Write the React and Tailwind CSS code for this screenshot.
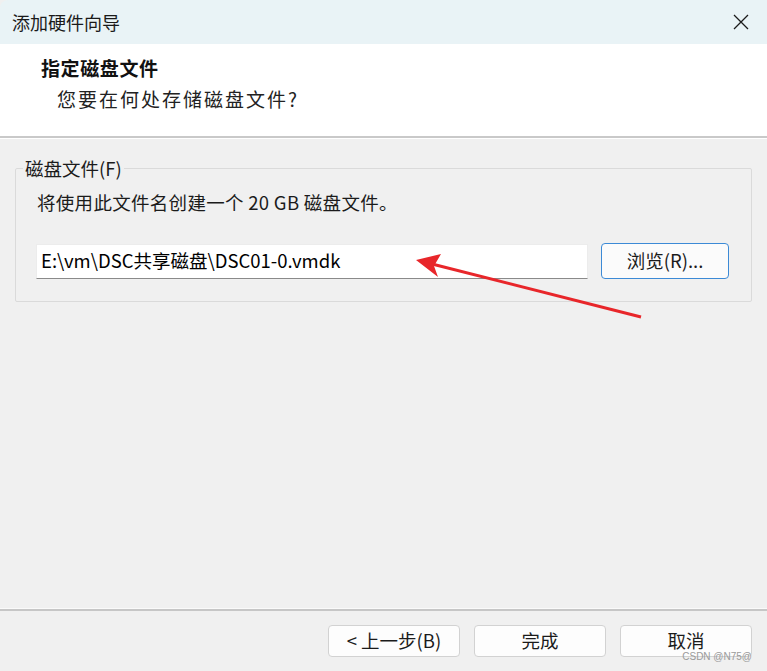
import React from "react";

const font = { fontFamily: '"Segoe UI", "Noto Sans CJK SC", "Noto Sans", sans-serif' };

function Btn({ children, className = "" }) {
  return (
    <div
      className={
        "flex h-[32px] w-[132px] items-center justify-center rounded-[4px] border border-[#d2d2d2] bg-[#fdfdfd] text-[18.5px] text-[#1b1b1b] " +
        className
      }
    >
      {children}
    </div>
  );
}

export default function App() {
  return (
    <div
      className="relative flex h-[671px] w-[767px] flex-col overflow-hidden bg-[#f0f0f0] [font-family:'Noto_Sans_CJK_SC','Noto_Sans',sans-serif]"
    >
      {/* Title bar */}
      <div className="flex h-[44px] shrink-0 items-center justify-between rounded-tl-[8px] bg-[#e9f3f6] pl-[12px] pr-[17px]">
        <span className="text-[18px] leading-[24px] text-[#1a1a1a]">添加硬件向导</span>
        <svg width="16" height="16" viewBox="0 0 16 16" className="mr-[1px]">
          <path d="M1 1 L15 15 M15 1 L1 15" stroke="#1a1a1a" strokeWidth="1.3" fill="none" />
        </svg>
      </div>

      {/* Header */}
      <div className="flex h-[92px] shrink-0 flex-col bg-white pt-[12px]">
        <div className="pl-[41px] text-[19px] font-bold leading-[24px] tracking-[0.6px] text-[#111]">指定磁盘文件</div>
        <div className="mt-[7px] pl-[57px] text-[19px] leading-[24px] tracking-[2px] text-[#222]">您要在何处存储磁盘文件?</div>
      </div>
      <div className="h-[2px] shrink-0 bg-[#c9c9c9]" />
      <div className="h-[1px] shrink-0 bg-white" />

      {/* Body */}
      <div className="flex flex-1 flex-col">
        <fieldset className="mx-[15px] mt-[17px] rounded-[2px] border border-[#dadada] pb-[22px]">
          <legend className="ml-[7px] px-[2px] text-[18.5px] leading-[24px] text-[#1b1b1b]">磁盘文件(F)</legend>
          <div className="mt-[10px] pl-[21px] text-[18.5px] leading-[24px] tracking-[0.3px] text-[#1b1b1b]">
            将使用此文件名创建一个 <span style={font}>20 GB</span> 磁盘文件。
          </div>
          <div className="mt-[29px] flex items-center pl-[20px]">
            <div className="flex h-[35px] w-[552px] items-center border border-[#ececec] border-b-[#8a8a8a] bg-white pl-[4px] pb-[2px]">
              <span className="text-[18.5px] leading-[24px] text-black" style={font}>
                E:\vm\DSC共享磁盘\DSC01-0.vmdk
              </span>
            </div>
            <div className="ml-[13px] flex h-[36px] w-[128px] items-center justify-center rounded-[4px] border border-[#3c8ad6] bg-[#fbfbfb] text-[18.5px] text-[#1b1b1b]">
              浏览(R)...
            </div>
          </div>
        </fieldset>
      </div>

      {/* Bottom separator */}
      <div className="h-[1px] shrink-0 bg-[#fafafa]" />
      <div className="h-[2px] shrink-0 bg-[#c6c6c6]" />
      <div className="flex h-[60px] shrink-0 items-start justify-end gap-[14px] pr-[15px] pt-[14px]">
        <Btn>&lt; 上一步(B)</Btn>
        <Btn>完成</Btn>
        <Btn>取消</Btn>
      </div>

      {/* Red arrow annotation */}
      <svg className="pointer-events-none absolute left-0 top-0" width="767" height="671">
        <line x1="641" y1="317" x2="432" y2="264" stroke="#e8262a" strokeWidth="3" />
        <polygon points="416,260 441,254 434,266 438,277" fill="#e8262a" />
      </svg>

      {/* Watermark */}
      <div className="pointer-events-none absolute bottom-[8px] right-[15px] text-[10px] leading-[12px] text-[#9a9a9a]" style={{ fontFamily: '"Liberation Sans", sans-serif' }}>
        CSDN @N75@
      </div>
    </div>
  );
}
